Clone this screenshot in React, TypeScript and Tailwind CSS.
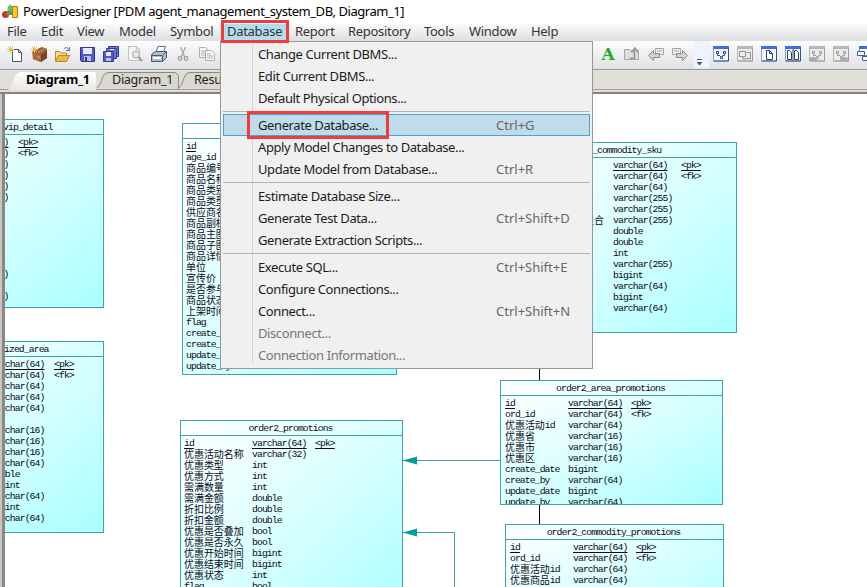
import type { ReactNode } from "react";
import clsx from "clsx";

type Row = { name?: string; type?: string; pk?: boolean; fk?: boolean };

type Entity = {
  title: string;
  box: string;
  titleClass?: string;
  nameCol: string;
  typeCol: string;
  rows: Row[];
};

type MenuEntry = { label: string; shortcut?: string; disabled?: boolean; active?: boolean };

const MENUS = [
  { label: "File", width: "w-[34px]" },
  { label: "Edit", width: "w-[36px]" },
  { label: "View", width: "w-[42px]" },
  { label: "Model", width: "w-[51px]" },
  { label: "Symbol", width: "w-[57px]" },
  { label: "Database", width: "w-[68px]" },
  { label: "Report", width: "w-[53px]" },
  { label: "Repository", width: "w-[76px]" },
  { label: "Tools", width: "w-[45px]" },
  { label: "Window", width: "w-[62px]" },
  { label: "Help", width: "w-[40px]" },
];

const MENU_GROUPS: MenuEntry[][] = [
  [{ label: "Change Current DBMS..." }, { label: "Edit Current DBMS..." }, { label: "Default Physical Options..." }],
  [
    { label: "Generate Database...", shortcut: "Ctrl+G", active: true },
    { label: "Apply Model Changes to Database..." },
    { label: "Update Model from Database...", shortcut: "Ctrl+R" },
  ],
  [
    { label: "Estimate Database Size..." },
    { label: "Generate Test Data...", shortcut: "Ctrl+Shift+D" },
    { label: "Generate Extraction Scripts..." },
  ],
  [
    { label: "Execute SQL...", shortcut: "Ctrl+Shift+E" },
    { label: "Configure Connections..." },
    { label: "Connect...", shortcut: "Ctrl+Shift+N" },
    { label: "Disconnect...", disabled: true },
    { label: "Connection Information...", disabled: true },
  ],
];

const v64 = "varchar(64)";

const ENTITIES: Entity[] = [
  {
    title: "vip_detail",
    box: "left-[-120px] top-[25px] w-[219px] h-[189px]",
    titleClass: "pl-[117px]",
    nameCol: "w-[64px]",
    typeCol: "w-[64px]",
    rows: [
      { type: v64, pk: true },
      { type: v64, fk: true },
      { type: v64 },
      { type: v64 },
      { type: v64 },
      { type: v64 },
      {},
      {},
      {},
      {},
      {},
      {},
      { type: v64 },
      {},
      { type: v64 },
    ],
  },
  {
    title: "ized_area",
    box: "left-[-120px] top-[247px] w-[219px] h-[192px]",
    titleClass: "pl-[118px]",
    nameCol: "w-[100px]",
    typeCol: "w-[64px]",
    rows: [
      { type: v64, pk: true },
      { type: v64, fk: true },
      { type: v64 },
      { type: v64 },
      { type: v64 },
      { type: "int" },
      { type: "varchar(16)" },
      { type: "varchar(16)" },
      { type: "varchar(16)" },
      { type: v64 },
      { type: "double" },
      { type: "bigint" },
      { type: v64 },
      { type: "bigint" },
      { type: v64 },
    ],
  },
  {
    title: "",
    box: "left-[177px] top-[29px] w-[215px] h-[252px]",
    nameCol: "-ml-px w-[80px]",
    typeCol: "w-[63px]",
    rows: [
      { name: "id", pk: true },
      { name: "age_id" },
      { name: "商品编号" },
      { name: "商品名称" },
      { name: "商品类别" },
      { name: "商品类型" },
      { name: "供应商名" },
      { name: "商品副标" },
      { name: "商品主图" },
      { name: "商品子图" },
      { name: "商品详情" },
      { name: "单位" },
      { name: "宣传价" },
      { name: "是否参与" },
      { name: "商品状态" },
      { name: "上架时间" },
      { name: "flag" },
      { name: "create_date" },
      { name: "create_by" },
      { name: "update_date" },
      { name: "update_by" },
    ],
  },
  {
    title: "order2_promotions",
    box: "left-[175px] top-[326px] w-[223px] h-[200px]",
    titleClass: "justify-center pr-[2px]",
    nameCol: "-ml-px w-[68px]",
    typeCol: "w-[63px]",
    rows: [
      { name: "id", type: v64, pk: true },
      { name: "优惠活动名称", type: "varchar(32)" },
      { name: "优惠类型", type: "int" },
      { name: "优惠方式", type: "int" },
      { name: "需满数量", type: "int" },
      { name: "需满金额", type: "double" },
      { name: "折扣比例", type: "double" },
      { name: "折扣金额", type: "double" },
      { name: "优惠是否叠加", type: "bool" },
      { name: "优惠是否永久", type: "bool" },
      { name: "优惠开始时间", type: "bigint" },
      { name: "优惠结束时间", type: "bigint" },
      { name: "优惠状态", type: "int" },
      { name: "flag", type: "bool" },
    ],
  },
  {
    title: "order2_area_promotions",
    box: "left-[495px] top-[286px] w-[223px] h-[125px]",
    titleClass: "justify-center pr-[2px]",
    nameCol: "w-[63px]",
    typeCol: "w-[63px]",
    rows: [
      { name: "id", type: v64, pk: true },
      { name: "ord_id", type: v64, fk: true },
      { name: "优惠活动id", type: v64 },
      { name: "优惠省", type: "varchar(16)" },
      { name: "优惠市", type: "varchar(16)" },
      { name: "优惠区", type: "varchar(16)" },
      { name: "create_date", type: "bigint" },
      { name: "create_by", type: v64 },
      { name: "update_date", type: "bigint" },
      { name: "update_by", type: v64 },
    ],
  },
  {
    title: "order2_commodity_promotions",
    box: "left-[500px] top-[430px] w-[219px] h-[120px]",
    titleClass: "justify-center pr-[2px]",
    nameCol: "w-[63px]",
    typeCol: "w-[63px]",
    rows: [
      { name: "id", type: v64, pk: true },
      { name: "ord_id", type: v64, fk: true },
      { name: "优惠活动id", type: v64 },
      { name: "优惠商品id", type: v64 },
    ],
  },
  {
    title: "_commodity_sku",
    box: "left-[498px] top-[48px] w-[234px] h-[191px]",
    titleClass: "pl-[88px]",
    nameCol: "w-[105px] pl-[76px]",
    typeCol: "w-[68px]",
    rows: [
      { type: v64, pk: true },
      { type: v64, fk: true },
      { type: v64 },
      { type: "varchar(255)" },
      { type: "varchar(255)" },
      { name: "组合", type: "varchar(255)" },
      { type: "double" },
      { type: "double" },
      { type: "int" },
      { type: "varchar(255)" },
      { type: "bigint" },
      { type: v64 },
      { type: "bigint" },
      { type: v64 },
    ],
  },
];

// Half-width and full-width runs use different sizes so that two latin cells equal one CJK cell.
function Mono({ children }: { children: string }) {
  return children.split(/([\u4e00-\u9fff]+)/).map((part, i) =>
    i % 2 ? (
      <span
        key={i}
        className="inline-block h-[11px] align-top font-['Noto_Sans_CJK_SC',sans-serif] text-[10px] leading-[10px] tracking-[-0.05px]"
      >
        {part}
      </span>
    ) : (
      <span key={i}>{part}</span>
    ),
  );
}

function EntityBox({ entity }: { entity: Entity }) {
  return (
    <section
      className={clsx(
        "absolute flex flex-col overflow-hidden border border-[#3fa3a3] bg-gradient-to-br from-white via-[#d9ffff] to-[#a8ffff] font-['Liberation_Mono',monospace] text-[9.8px] tracking-[-0.93px] text-[#0a0a18]",
        entity.box,
      )}
    >
      <header className={clsx("flex h-[15px] shrink-0 items-center border-b border-[#3fa3a3] leading-[13px] whitespace-nowrap", entity.titleClass)}>
        {entity.title}
      </header>
      <div className="flex flex-col pt-[2px] pl-[4px]">
        {entity.rows.map((row, i) => (
          <div key={i} className="flex h-[11px] leading-[11px] whitespace-nowrap">
            <span className={clsx("shrink-0", entity.nameCol)}>
              <span className={clsx(row.pk && "underline underline-offset-[1.5px]")}>
                <Mono>{row.name ?? ""}</Mono>
              </span>
            </span>
            <span className={clsx("shrink-0", entity.typeCol)}>
              <span className={clsx(row.pk && "underline underline-offset-[1.5px]")}>{row.type}</span>
            </span>
            {row.pk && row.type && <span className="underline underline-offset-[1.5px]">&lt;pk&gt;</span>}
            {row.fk && <span>&lt;fk&gt;</span>}
          </div>
        ))}
      </div>
    </section>
  );
}

function Icon({ children }: { children: ReactNode }) {
  return (
    <svg width="16" height="16" viewBox="0 0 16 16" className="shrink-0">
      {children}
    </svg>
  );
}

function Spark() {
  return <path d="M3.5 0v7M0 3.5h7M1 1l5 5M6 1L1 6" stroke="#ecc040" strokeWidth="1" />;
}

function WindowIcon({ gray, children }: { gray?: boolean; children: ReactNode }) {
  return (
    <Icon>
      <rect x="0.5" y="0.5" width="15" height="14.5" fill={gray ? "#ececec" : "#f4f8ff"} stroke={gray ? "#b5b5b5" : "#8fa0c4"} />
      <rect x="0" y="0" width="16" height="3" fill={gray ? "#b8b8b8" : "#3f6de0"} />
      <path d="M15.5 3v12H1" fill="none" stroke={gray ? "#999" : "#39527f"} />
      {children}
    </Icon>
  );
}

function Nodes({ color }: { color: string }) {
  return (
    <path
      d="M3.5 5.5h2v2h-2zM10.5 5.5h2v2h-2zM7.5 10.5h2v2h-2zM4.5 8v1.5h2.5M11.5 8v1.5h-2"
      fill="#fff"
      stroke={color}
    />
  );
}

function LeftTools() {
  return (
    <div className="flex gap-[8px] pl-[7px]">
      <Icon>
        <path d="M5.5 3.5h6l3 3v9h-9z" fill="#fff" stroke="#4a5666" />
        <path d="M11.5 3.5v3h3" fill="none" stroke="#4a5666" />
        <Spark />
      </Icon>
      <Icon>
        <path d="M1 5l10-4 5 2v9l-6 4-8-3z" fill="#9b6038" />
        <path d="M2 7l8 2v7l-8-3z" fill="#a96c42" />
        <path d="M10 9l6-4v7l-6 4z" fill="#77432a" />
        <path d="M7 6.5l6-3.5M6 11h3" stroke="#d6a574" />
        <Spark />
      </Icon>
      <Icon>
        <path d="M0.5 15V5.5h4l1 1.5h6v3" fill="#f8dc8c" stroke="#b88728" />
        <path d="M0.5 15.5l3-6h11l-3 6z" fill="#f2b840" stroke="#b88728" />
        <path d="M9 3c1-2 4-2 5 1M14.5 1v3.5H11" fill="none" stroke="#5872a0" />
      </Icon>
      <Icon>
        <path d="M1.5 1.5h14v14h-13l-1-1z" fill="#5058d6" stroke="#2f388f" />
        <rect x="4" y="2" width="9" height="6" fill="#e6ecff" />
        <rect x="5" y="10" width="7" height="5" fill="#bcc5e6" />
        <rect x="6" y="11" width="2" height="4" fill="#2d377f" />
      </Icon>
      <Icon>
        <path d="M5.5 0.5h10v10h-10z" fill="#6d76dd" stroke="#333c94" />
        <path d="M3.5 2.5h10v10h-10z" fill="#6d76dd" stroke="#333c94" />
        <path d="M0.5 5.5h10v10h-10z" fill="#5058d6" stroke="#333c94" />
        <path d="M3 6h5v4H3zM7 3h4v1H7z" fill="#e6ecff" />
        <path d="M3 12h5v3H3z" fill="#bcc5e6" />
      </Icon>
      <Icon>
        <path d="M1.5 0.5h8l3 3v11h-11z" fill="#f4f4f4" stroke="#c2c2c2" />
        <path d="M9.5 0.5v3h3" fill="none" stroke="#c2c2c2" />
        <circle cx="9" cy="8.5" r="3.5" fill="#e3e8ea" stroke="#a8a8a8" />
        <path d="M11.5 11l3.5 4" stroke="#999" strokeWidth="2" />
      </Icon>
      <Icon>
        <path d="M5 6l2-5.5h7.5L12 7" fill="#fff" stroke="#5d6b7d" />
        <path d="M0.5 8.5l4-3h11v6l-4 4h-11z" fill="#aebccd" stroke="#485a72" />
        <path d="M0.5 9.5h11v5.5M11.5 9.5l4-4" fill="none" stroke="#485a72" />
        <path d="M2 12h8" stroke="#fff" strokeWidth="2" />
      </Icon>
      <Icon>
        <path d="M5.5 1l4 9.5M10.5 1L6.5 10.5" stroke="#a8a8a8" strokeWidth="1.3" />
        <circle cx="5" cy="12.5" r="1.8" fill="none" stroke="#999" strokeWidth="1.2" />
        <circle cx="11" cy="12.5" r="1.8" fill="none" stroke="#999" strokeWidth="1.2" />
      </Icon>
      <Icon>
        <path d="M0.5 1.5h6l2 2v8h-8z" fill="#f3f3f3" stroke="#b0b0b0" />
        <path d="M6.5 4.5h6l3 3v7h-9z" fill="#f3f3f3" stroke="#b0b0b0" />
        <path d="M2 5h4M2 7h4M2 9h4M8 8h4M8 10h6M8 12h6" stroke="#b8b8b8" />
      </Icon>
    </div>
  );
}

function RightTools() {
  return (
    <div className="flex w-[290px]">
      <div className="flex shrink-0 gap-[8px]">
        <span className="flex h-4 w-4 shrink-0 items-center justify-center font-['DejaVu_Serif',serif] text-[17px] leading-4 font-bold text-[#22aa22]">
          A
        </span>
        <Icon>
          <path d="M0.5 3.5h5l1 1h8v9h-14z" fill="#ddd" stroke="#a8a8a8" />
          <path d="M6 12.5h4.5V5M7.5 6.5L11 2l3.5 4.5" fill="none" stroke="#909090" strokeWidth="1.5" />
        </Icon>
        <Icon>
          <path d="M7.5 2.5h8v6h-8z" fill="#eee" stroke="#a5a5a5" />
          <path d="M0.5 9.5l5-5v3h6v4h-6v3z" fill="#d2d2d2" stroke="#8c8c8c" />
          <path d="M9 5h5" stroke="#aaa" />
        </Icon>
        <Icon>
          <path d="M0.5 2.5h8v6h-8z" fill="#eee" stroke="#a5a5a5" />
          <path d="M15.5 9.5l-5-5v3h-6v4h6v3z" fill="#d2d2d2" stroke="#8c8c8c" />
          <path d="M2 5h5" stroke="#aaa" />
        </Icon>
      </div>
      <div className="mt-[-6px] ml-[6px] flex h-[28px] w-[15px] shrink-0 items-center justify-center bg-[#eef4fd] pt-[17px] pr-[4px]">
        <svg width="7" height="7" viewBox="0 0 7 7">
          <path d="M1 0.5h5" stroke="#505a66" />
          <path d="M0.5 3h6l-3 3.5z" fill="#505a66" />
        </svg>
      </div>
      <div className="ml-[4px] flex shrink-0 gap-[8px]">
        <WindowIcon>
          <Nodes color="#2c43ad" />
        </WindowIcon>
        <WindowIcon gray>
          <path d="M2.5 5.5h6v5h-6zM9.5 6.5h4v3M9 12.5h4.5v-4M6 10v3h3" fill="none" stroke="#8f8f8f" />
        </WindowIcon>
        <WindowIcon>
          <path d="M5.5 4.5h3l3 3v6h-6z" fill="#fff" stroke="#2e3f6b" />
          <path d="M8.5 4.5v3h3" fill="none" stroke="#2e3f6b" />
        </WindowIcon>
        <WindowIcon>
          <path d="M2.5 4.5h2l2 2v7h-4zM9.5 4.5h2l2 2v7h-4z" fill="#fff" stroke="#2e3f6b" />
          <path d="M8 3v12" stroke="#39527f" />
        </WindowIcon>
        <WindowIcon gray>
          <Nodes color="#999" />
          <ellipse cx="4" cy="13" rx="4" ry="2" fill="#aaa" />
        </WindowIcon>
        <WindowIcon gray>
          <Nodes color="#999" />
          <ellipse cx="11" cy="13" rx="4" ry="2" fill="#aaa" />
        </WindowIcon>
        <Icon>
          <rect x="2.5" y="0.5" width="13" height="9" fill="#f4f8ff" stroke="#7f8fae" />
          <rect x="2" width="14" height="3" fill="#3f6de0" />
          <path d="M0.5 5.5h7v4h-7zM5.5 10.5h9v4h-9z" fill="#fff" stroke="#4059a8" />
        </Icon>
      </div>
    </div>
  );
}

function TabStrip() {
  return (
    <div className="border-b-2 border-[#848280] bg-[#e1ded9] pb-[2px]">
      <div className="flex h-[20px] border-b border-[#a19f9b] text-[12.6px] leading-[19px]">
        <div className="relative h-[20px] w-[97px]">
          <svg className="absolute inset-0" width="97" height="20">
            <defs>
              <linearGradient id="tab" x2="0" y2="1">
                <stop offset="0" stopColor="#fff" />
                <stop offset="1" stopColor="#e9e7e3" />
              </linearGradient>
            </defs>
            <path d="M8 20C14 15 13 2 22 2H96V20z" fill="url(#tab)" />
          </svg>
          <span className="relative pl-[26px] font-bold tracking-[-0.25px] text-black">Diagram_1</span>
        </div>
        <div className="relative h-[19px] w-[82px]">
          <svg className="absolute inset-0" width="82" height="19">
            <path d="M0 18C6 13 4 2.5 12 2.5H78.5L81.5 5.5V19" fill="#dad7d1" stroke="#8a8884" />
          </svg>
          <span className="relative pl-[15px] tracking-[-0.3px] text-[#222]">Diagram_1</span>
        </div>
        <div className="relative h-[19px] w-[100px]">
          <svg className="absolute inset-0" width="100" height="19">
            <path d="M0 18C5 13 4 2.5 11 2.5H99.5V19" fill="#dad7d1" stroke="#8a8884" />
          </svg>
          <span className="relative pl-[15px] tracking-[-0.25px] text-[#222]">Result List</span>
        </div>
      </div>
    </div>
  );
}

function DatabaseMenu() {
  return (
    <div className="absolute top-[41px] left-[220px] h-[328px] w-[373px] border border-[#979797] bg-[#f0f0f0] px-[2px] pt-px text-[13px]">
      <span className="absolute top-[2px] bottom-[4px] left-[31px] w-px bg-[#d5d5d5]" />
      {MENU_GROUPS.map((group, i) => (
        <div key={i} className="relative">
          {i > 0 && (
            <div className="flex h-[5px] pt-[2px]">
              <div className="h-px w-full bg-[#b4b4b4]" />
            </div>
          )}
          {group.map((entry) => (
            <div
              key={entry.label}
              className={clsx(
                "flex h-[22px] items-center border pt-[2px] pl-[34px] whitespace-nowrap",
                entry.active ? "border-[#4b9fe0] bg-[#c0dcea]" : "border-transparent",
                entry.disabled ? "text-[#777]" : "text-[#1c1c1c]",
              )}
            >
              <span className="w-[238px] tracking-[-0.4px]">{entry.label}</span>
              <span className="text-[#666]">{entry.shortcut}</span>
            </div>
          ))}
        </div>
      ))}
      <span className="absolute top-[69px] left-[26px] h-[28px] w-[142px] border-3 border-[#f23c3c]" />
    </div>
  );
}

export default function App() {
  return (
    <div className="relative flex h-[587px] w-[867px] flex-col overflow-hidden bg-white font-['Noto_Sans',sans-serif]">
      <div className="flex h-[24px] items-center gap-[4px] pl-[2px] text-[13px] text-black">
        <svg width="17" height="16" viewBox="0 0 17 16">
          <circle cx="3.5" cy="10.5" r="3.5" fill="#d92c2c" />
          <path d="M8 0l5 11H4z" fill="#47a447" />
          <circle cx="8.5" cy="4.5" r="3" fill="#6ac05f" />
          <path d="M10.5 2.5h5v11h-5z" fill="#ffc928" stroke="#b57712" />
        </svg>
        <span className="tracking-[-0.45px] whitespace-nowrap">PowerDesigner [PDM agent_management_system_DB, Diagram_1]</span>
      </div>
      <nav className="flex h-[17px] bg-gradient-to-b from-[#fbfbfb] to-[#dcdee1] pl-[7px] text-[13px] leading-[15px] tracking-[-0.3px] text-[#333]">
        {MENUS.map((menu) => (
          <span key={menu.label} className={clsx("shrink-0", menu.width)}>
            {menu.label === "Database" ? (
              <span className="-ml-[4px] block h-[17px] w-[63px] bg-[#b4dcef] pl-[4px]">{menu.label}</span>
            ) : (
              menu.label
            )}
          </span>
        ))}
      </nav>
      <div className="flex h-[29px] justify-between border-b border-[#9b9b9b] bg-gradient-to-b from-[#fcfcfd] to-[#dfe1e4] pt-[5px]">
        <LeftTools />
        <div className="mt-[-5px] w-[267px] overflow-hidden pt-[5px]">
          <RightTools />
        </div>
      </div>
      <TabStrip />
      <main className="flex flex-1 border-l-2 border-[#c9c5c0]">
        <div className="relative h-full flex-1 overflow-hidden border-l-3 border-[#8a8784] bg-white">
          <svg className="absolute inset-0" width="862" height="493">
            <path d="M534.5 270V286M534.5 411V430" stroke="#000" />
            <path d="M398 366.5H495M398 438.5H449.5V493" fill="none" stroke="#3fa3a3" />
            <path d="M398 366.5L412 362.5V370.5zM398 438.5L412 434.5V442.5z" fill="#009c9c" />
          </svg>
          {ENTITIES.map((entity) => (
            <EntityBox key={entity.box} entity={entity} />
          ))}
        </div>
      </main>
      <DatabaseMenu />
      <span className="absolute top-[20px] left-[221px] h-[23px] w-[68px] border-3 border-[#f23c3c]" />
    </div>
  );
}
